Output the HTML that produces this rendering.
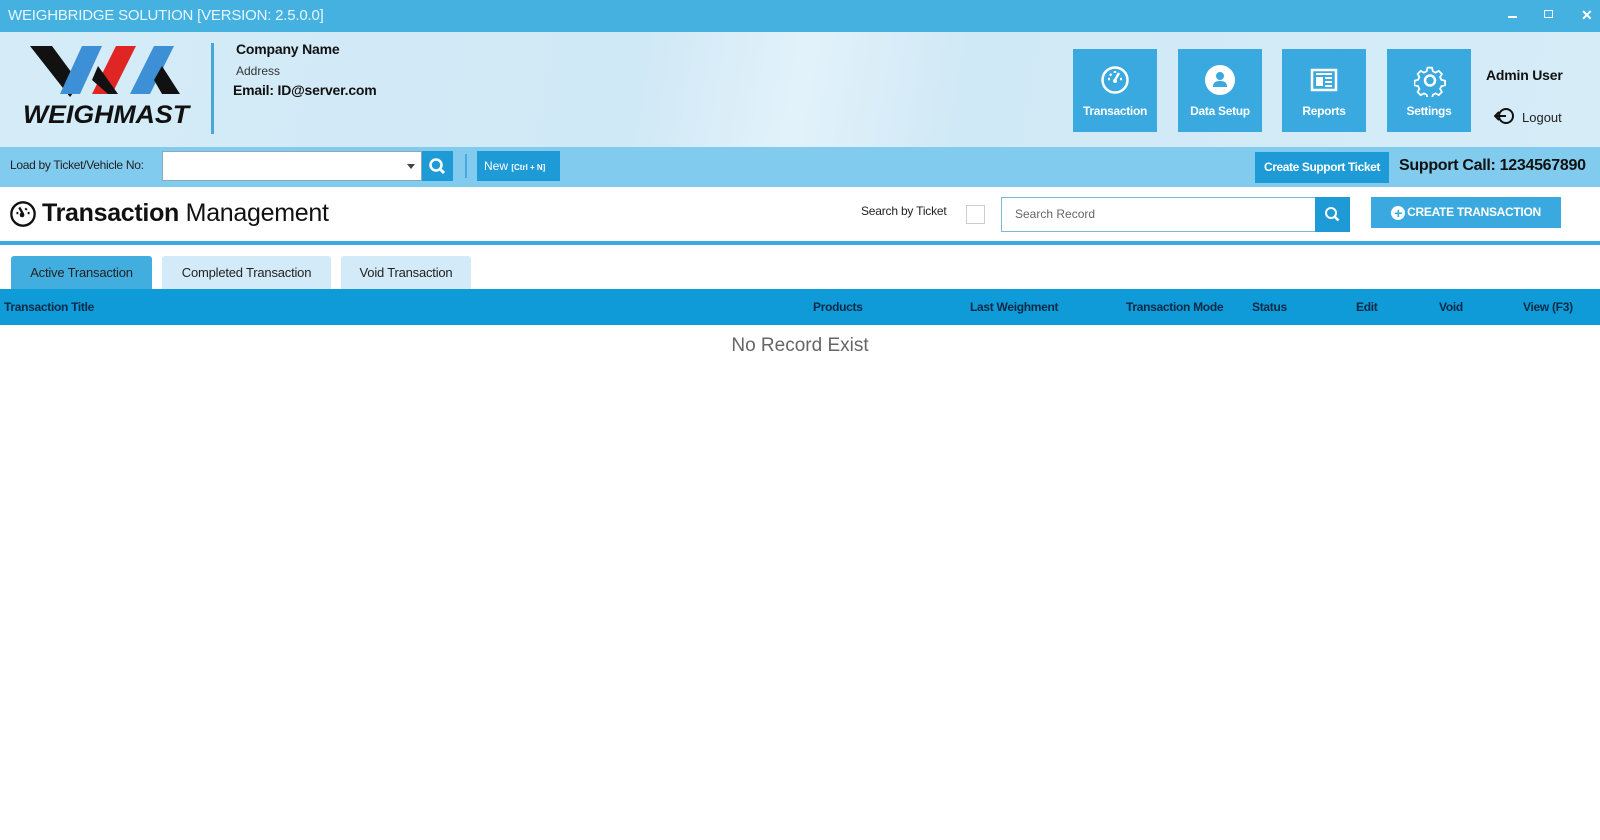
<!DOCTYPE html>
<html><head><meta charset="utf-8"><style>
*{margin:0;padding:0;box-sizing:border-box}
body{width:1600px;height:840px;background:#fff;font-family:"Liberation Sans",sans-serif;position:relative;overflow:hidden;color:#111}
.abs{position:absolute;white-space:nowrap}
.title{left:0;top:0;width:1600px;height:32px;background:#45b1e1;color:#e8f6fd;font-size:15px;line-height:32px;padding-left:8px;letter-spacing:-0.2px}
.hdr{left:0;top:32px;width:1600px;height:115px;background:linear-gradient(100deg,#d5ecf8 0%,#d0e9f6 40%,#e2f2fa 50%,#d0e9f6 60%,#d6edf8 100%)}
.tile{top:49px;width:84px;height:83px;background:#3aa9df;color:#fff;font-size:12px;font-weight:bold;text-align:center;letter-spacing:-0.3px}
.tile span{position:absolute;left:0;right:0;top:55px}
.tile svg{position:absolute;left:27px;top:16px}
.bar{left:0;top:147px;width:1600px;height:40px;background:#80cbee}
.btn{background:#1e9ad6;color:#fff}
.th{left:0;top:289px;width:1600px;height:36px;background:#0f9ad8;font-size:12px;font-weight:bold;color:#0c2a45;line-height:36px;letter-spacing:-0.3px}
.th span{position:absolute}
.tab{top:256px;height:33px;font-size:13px;line-height:33px;text-align:center;border-radius:3px 3px 0 0;color:#222;letter-spacing:-0.2px}
</style></head><body>
<div class="abs title">WEIGHBRIDGE SOLUTION [VERSION: 2.5.0.0]</div>
<div class="abs" style="left:1508px;top:16px;width:9px;height:2px;background:#fff"></div>
<div class="abs" style="left:1544px;top:10px;width:9px;height:8px;border:1.5px solid #fff"></div>
<div class="abs" style="left:1581px;top:7px;color:#fff;font-weight:bold;font-size:14px">✕</div>
<div class="abs hdr"></div>
<svg class="abs" style="left:20px;top:44px" width="175" height="85">
<polygon points="10,2 32,2 60,40 50,53" fill="#111"/>
<polygon points="62,2 82,2 60,50 40,50" fill="#3d8fd6"/>
<polygon points="96,2 116,2 92,50 72,50" fill="#e02525"/>
<polygon points="78,22 98,50 88,50 72,36" fill="#111"/>
<polygon points="134,2 154,2 130,50 110,50" fill="#3d8fd6"/>
<polygon points="142,22 160,50 142,50 134,36" fill="#111"/>
<text x="3" y="79" font-family="Liberation Sans" font-weight="bold" font-style="italic" font-size="25" fill="#111" textLength="166" lengthAdjust="spacingAndGlyphs">WEIGHMAST</text>
</svg>
<div class="abs" style="left:211px;top:43px;width:3px;height:91px;background:#4aa6da"></div>
<div class="abs" style="left:236px;top:41px;font-size:14px;font-weight:bold;letter-spacing:-0.2px">Company Name</div>
<div class="abs" style="left:236px;top:64px;font-size:12px;color:#333">Address</div>
<div class="abs" style="left:233px;top:82px;font-size:14px;font-weight:bold;letter-spacing:-0.2px">Email: ID@server.com</div>

<div class="abs tile" style="left:1073px"><svg width="30" height="30" viewBox="0 0 30 30"><circle cx="15" cy="15" r="12.5" fill="none" stroke="#fff" stroke-width="2.5"/><path d="M15 15 L19 8 M8 14h2 M20 14h2 M10 9l1.5 1.5 M15 6v2" stroke="#fff" stroke-width="2.5"/><circle cx="15" cy="16" r="2" fill="#fff"/></svg><span>Transaction</span></div>
<div class="abs tile" style="left:1178px"><svg width="30" height="30" viewBox="0 0 30 30"><circle cx="15" cy="15" r="15" fill="#fff"/><circle cx="15" cy="11" r="4" fill="#3aa9df"/><path d="M8 22c0-5 3-6 7-6s7 1 7 6z" fill="#3aa9df"/></svg><span>Data Setup</span></div>
<div class="abs tile" style="left:1282px"><svg width="30" height="30" viewBox="0 0 30 30"><rect x="3" y="5" width="24" height="20" fill="none" stroke="#fff" stroke-width="2.5"/><rect x="7" y="12" width="7" height="9" fill="#fff"/><path d="M7 9h16 M16 13h7 M16 17h7 M16 21h7" stroke="#fff" stroke-width="2"/></svg><span>Reports</span></div>
<div class="abs tile" style="left:1387px"><svg width="32" height="32" viewBox="0 0 32 32"><path d="M13.5 3h5l1 4 3 1.5 3.5-2 3.5 3.5-2 3.5 1.5 3 4 1v5l-4 1-1.5 3 2 3.5-3.5 3.5-3.5-2-3 1.5-1 4h-5l-1-4-3-1.5-3.5 2-3.5-3.5 2-3.5-1.5-3-4-1v-5l4-1 1.5-3-2-3.5 3.5-3.5 3.5 2 3-1.5z" transform="scale(.9) translate(1.5,0)" fill="none" stroke="#fff" stroke-width="2"/><circle cx="16" cy="15.5" r="5" fill="none" stroke="#fff" stroke-width="2.5"/></svg><span>Settings</span></div>
<div class="abs" style="left:1486px;top:67px;font-size:14px;font-weight:bold;letter-spacing:-0.2px">Admin User</div>
<svg class="abs" style="left:1494px;top:107px" width="22" height="18"><circle cx="12" cy="9" r="7" fill="none" stroke="#111" stroke-width="2"/><path d="M1 9h11 M5 5l-4 4 4 4" fill="none" stroke="#111" stroke-width="2"/></svg>
<div class="abs" style="left:1522px;top:110px;font-size:13px;color:#222">Logout</div>

<div class="abs bar"></div>
<div class="abs" style="left:10px;top:158px;font-size:12px;color:#222;letter-spacing:-0.3px">Load by Ticket/Vehicle No:</div>
<div class="abs" style="left:162px;top:151px;width:260px;height:30px;background:#fff;border:1px solid #8ab"></div>
<div class="abs" style="left:407px;top:164px;border:4px solid transparent;border-top:5px solid #444"></div>
<div class="abs btn" style="left:422px;top:151px;width:31px;height:30px"><svg width="31" height="30"><circle cx="14" cy="14" r="5.5" fill="none" stroke="#fff" stroke-width="2.5"/><path d="M18 18l4 4" stroke="#fff" stroke-width="3"/></svg></div>
<div class="abs" style="left:465px;top:154px;width:2px;height:24px;background:#4aa8dc"></div>
<div class="abs btn" style="left:477px;top:151px;width:83px;height:30px;font-size:12px;line-height:30px;padding-left:7px">New <span style="font-size:8px;font-weight:bold">[Ctrl + N]</span></div>
<div class="abs btn" style="left:1255px;top:152px;width:134px;height:31px;font-size:12px;font-weight:bold;line-height:31px;text-align:center;letter-spacing:-0.4px">Create Support Ticket</div>
<div class="abs" style="left:1399px;top:157px;font-size:16px;font-weight:bold;color:#111;letter-spacing:-0.3px">Support Call: 1234567890</div>

<svg class="abs" style="left:9px;top:200px" width="28" height="28" viewBox="0 0 30 30"><circle cx="15" cy="15" r="12.5" fill="none" stroke="#111" stroke-width="2.5"/><path d="M15 15 L11 8 M8 14h2 M20 14h2 M19 9l-1.5 1.5" stroke="#111" stroke-width="2.5"/><circle cx="14" cy="16" r="2.5" fill="#111"/></svg>
<div class="abs" style="left:42px;top:199px;font-size:25px;letter-spacing:-0.3px"><b>Transaction</b> Management</div>
<div class="abs" style="left:861px;top:204px;font-size:12px;color:#222;letter-spacing:-0.2px">Search by Ticket</div>
<div class="abs" style="left:966px;top:205px;width:19px;height:19px;border:1px solid #ccc;background:#fff"></div>
<div class="abs" style="left:1001px;top:197px;width:315px;height:35px;border:1px solid #7ab8d8;font-size:12px;color:#666;line-height:33px;padding-left:13px">Search Record</div>
<div class="abs btn" style="left:1315px;top:197px;width:35px;height:35px"><svg width="35" height="35"><circle cx="16" cy="16" r="5" fill="none" stroke="#fff" stroke-width="2"/><path d="M19.5 19.5l4 4" stroke="#fff" stroke-width="2.5"/></svg></div>
<div class="abs" style="left:1371px;top:197px;width:190px;height:31px;background:#3aa9df;color:#fff;font-size:12px;font-weight:bold;line-height:31px;text-align:center;letter-spacing:-0.3px"><span style="display:inline-block;width:14px;height:14px;border-radius:50%;background:#fff;color:#3aa9df;font-size:14px;line-height:14px;vertical-align:-2px;margin-right:2px">+</span>CREATE TRANSACTION</div>
<div class="abs" style="left:0;top:241px;width:1600px;height:4px;background:#3aa9df"></div>

<div class="abs tab" style="left:11px;width:141px;background:#42aee0">Active Transaction</div>
<div class="abs tab" style="left:162px;width:169px;background:#d3ebf8">Completed Transaction</div>
<div class="abs tab" style="left:341px;width:130px;background:#d3ebf8">Void Transaction</div>
<div class="abs th"><span style="left:4px">Transaction Title</span><span style="left:813px">Products</span><span style="left:970px">Last Weighment</span><span style="left:1126px">Transaction Mode</span><span style="left:1252px">Status</span><span style="left:1356px">Edit</span><span style="left:1439px">Void</span><span style="left:1523px">View (F3)</span></div>
<div class="abs" style="left:0;top:325px;width:1600px;text-align:center;font-size:19px;color:#666;line-height:42px">No Record Exist</div>
</body></html>
